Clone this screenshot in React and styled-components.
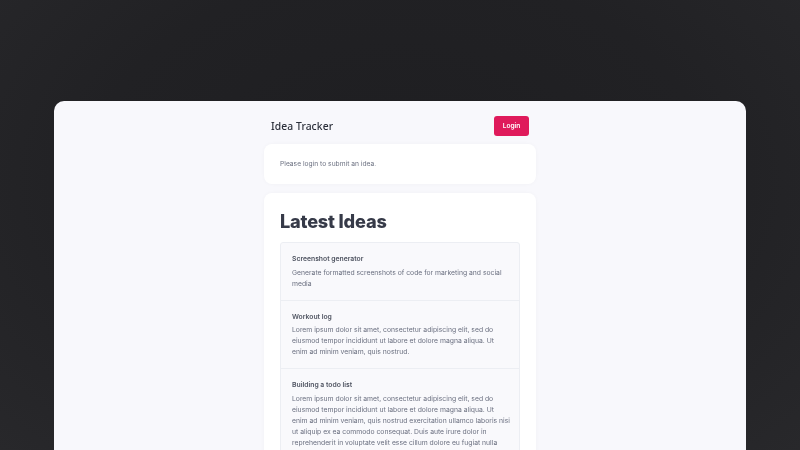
import React from "react";
import styled, { createGlobalStyle } from "styled-components";

const Global = createGlobalStyle`
  html, body { margin: 0; padding: 0; }
  body {
    width: 800px; height: 450px; overflow: hidden;
    background: radial-gradient(ellipse at 50% 40%, #1e1e21 0%, #212124 55%, #28282b 100%);
    font-family: Inter, "Noto Sans", sans-serif;
    -webkit-font-smoothing: antialiased;
  }
`;

const Stage = styled.div`
  padding: 101px 54px 0;
  height: 450px;
  box-sizing: border-box;
`;

const Window = styled.div`
  background: #f8f8fc;
  border-radius: 10px 10px 0 0;
  height: 349px;
  overflow: hidden;
  display: flex;
  justify-content: center;
  will-change: transform;
`;

const Column = styled.div`
  width: 272px;
  display: flex;
  flex-direction: column;
  & > * { flex-shrink: 0; }
`;

const Header = styled.header`
  display: flex;
  align-items: center;
  justify-content: space-between;
  height: 43px;
  box-sizing: border-box;
  padding: 7px 7px 0;
`;

const Brand = styled.div`
  font-family: "Noto Sans", Inter, sans-serif;
  font-size: 10.3px;
  font-weight: 500;
  color: #2b2f3a;
  letter-spacing: 0.1px;
`;

const LoginButton = styled.button`
  width: 35px;
  height: 20px;
  border: 0;
  border-radius: 3px;
  background: #df1a5b;
  color: #fff;
  font-family: Inter, sans-serif;
  font-size: 6.6px;
  font-weight: 600;
  padding: 0;
`;

const Card = styled.section`
  background: #fff;
  border-radius: 8px;
  box-shadow: 0 0 4px rgba(20, 20, 40, 0.03);
  padding: ${(p) => p.$pad || "16px"};
  margin-bottom: 9px;
`;

const Notice = styled.p`
  margin: 0;
  font-size: 6.7px;
  line-height: 8px;
  color: #6b7080;
`;

const Heading = styled.h1`
  margin: 0 0 9px;
  font-family: Inter, sans-serif;
  font-weight: 800;
  font-size: 18.2px;
  line-height: 24px;
  color: #363a48;
  letter-spacing: -0.2px;
`;

const List = styled.ul`
  list-style: none;
  margin: 0;
  padding: 0;
  border: 1px solid #eceef3;
  border-radius: 3px;
  background: #f9f9fc;
`;

const Item = styled.li`
  padding: 11px 9px 11px 11px;
  border-top: ${(p) => (p.$first ? "0" : "1px solid #eceef3")};
`;

const ItemTitle = styled.div`
  font-size: 6.8px;
  font-weight: 600;
  color: #4e5360;
  line-height: 10px;
  margin-bottom: 2.5px;
`;

const ItemText = styled.p`
  margin: 0;
  font-size: 6.8px;
  line-height: 11px;
  color: #6b7080;
`;

const ideas = [
  {
    title: "Screenshot generator",
    text: "Generate formatted screenshots of code for marketing and social media",
  },
  {
    title: "Workout log",
    text: "Lorem ipsum dolor sit amet, consectetur adipiscing elit, sed do eiusmod tempor incididunt ut labore et dolore magna aliqua. Ut enim ad minim veniam, quis nostrud.",
  },
  {
    title: "Building a todo list",
    text: "Lorem ipsum dolor sit amet, consectetur adipiscing elit, sed do eiusmod tempor incididunt ut labore et dolore magna aliqua. Ut enim ad minim veniam, quis nostrud exercitation ullamco laboris nisi ut aliquip ex ea commodo consequat. Duis aute irure dolor in reprehenderit in voluptate velit esse cillum dolore eu fugiat nulla pariatur. Excepteur sint occaecat cupidatat non proident, sunt in culpa qui officia deserunt mollit anim id est laborum.",
  },
];

export default function App() {
  return (
    <>
      <Global />
      <Stage>
        <Window>
          <Column>
            <Header>
              <Brand>Idea Tracker</Brand>
              <LoginButton>Login</LoginButton>
            </Header>
            <Card>
              <Notice>Please login to submit an idea.</Notice>
            </Card>
            <Card $pad="16px 16px 0">
              <Heading>Latest Ideas</Heading>
              <List>
                {ideas.map((idea, i) => (
                  <Item key={idea.title} $first={i === 0}>
                    <ItemTitle>{idea.title}</ItemTitle>
                    <ItemText>{idea.text}</ItemText>
                  </Item>
                ))}
              </List>
            </Card>
          </Column>
        </Window>
      </Stage>
    </>
  );
}
